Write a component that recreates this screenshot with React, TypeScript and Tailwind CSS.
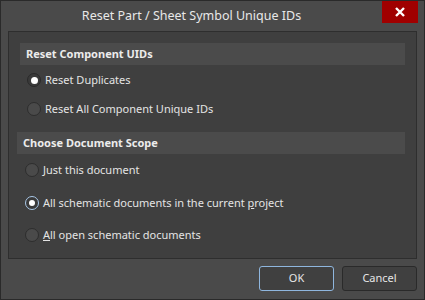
import React from 'react';

const font = { fontFamily: '"Noto Sans", "Open Sans", Arial, sans-serif' };

function Radio({ checked, focused }: { checked?: boolean; focused?: boolean }) {
  if (focused) {
    return (
      <span className="flex h-[14px] w-[14px] items-center justify-center rounded-full border border-[#a9c8e8] bg-[#3a3a3a]">
        <span className="h-[6px] w-[6px] rounded-full bg-white" />
      </span>
    );
  }
  if (checked) {
    return (
      <span className="flex h-[14px] w-[14px] items-center justify-center rounded-full border border-[#2a2a2a] bg-[#3a3a3a]">
        <span className="h-[7px] w-[7px] rounded-full bg-white" />
      </span>
    );
  }
  return <span className="h-[14px] w-[14px] rounded-full border border-[#2d2d2d] bg-[#4a4a4a]" />;
}

function Option({
  children,
  checked,
  focused,
  className,
}: {
  children: React.ReactNode;
  checked?: boolean;
  focused?: boolean;
  className?: string;
}) {
  return (
    <div className={`flex items-center gap-[4px] text-[11px] text-[#e4e4e4] ${className ?? ''}`}>
      <Radio checked={checked} focused={focused} />
      <span>{children}</span>
    </div>
  );
}

function SectionHeader({ title }: { title: string }) {
  return (
    <div className="flex h-[22px] items-center bg-[#4b4b4b] pl-[6px] text-[11px] font-bold text-[#ececec]">
      {title}
    </div>
  );
}

export default function App() {
  return (
    <div
      className="flex h-[300px] w-[425px] flex-col border border-[#2a2a2a] bg-[#4a4a4a] text-[#e6e6e6]"
      style={font}
    >
      {/* Title bar */}
      <div className="flex h-[30px] items-start">
        <div className="flex h-[30px] flex-1 items-center justify-center text-[12.5px] text-[#e8e8e8]">
          Reset Part / Sheet Symbol Unique IDs
        </div>
        <button className="mr-[6px] flex h-[22px] w-[36px] items-center justify-center bg-[#a00000]">
          <svg width="10" height="10" viewBox="0 0 10 10">
            <path d="M1 1 L9 9 M9 1 L1 9" stroke="white" strokeWidth="2.4" />
          </svg>
        </button>
      </div>

      {/* Content panel */}
      <div className="mx-[7px] flex h-[228px] flex-col border border-[#2e2e2e] bg-[#3f3f3f] px-[11px] pt-[11px]">
        <SectionHeader title="Reset Component UIDs" />
        <Option checked className="mt-[8px] h-[14px] pl-[7px]">
          Reset Duplicates
        </Option>
        <Option className="mt-[15px] h-[14px] pl-[7px]">Reset All Component Unique IDs</Option>

        {/* second group sits a few px further left */}
        <div className="-ml-[3px] flex flex-col">
          <div className="mt-[16px]">
            <SectionHeader title="Choose Document Scope" />
          </div>
          <Option className="mt-[9px] h-[14px] pl-[8px]">
            <span className="underline">J</span>ust this document
          </Option>
          <Option focused className="mt-[19px] h-[14px] pl-[8px]">
            All schematic documents in the current <span className="underline">p</span>roject
          </Option>
          <Option className="mt-[18px] h-[14px] pl-[8px]">
            <span className="underline">A</span>ll open schematic documents
          </Option>
        </div>
      </div>

      {/* Buttons */}
      <div className="mt-[7px] flex justify-end gap-[8px] pr-[7px]">
        <button className="h-[25px] w-[75px] rounded-[3px] border border-[#8fb6de] bg-[#404040] text-[11px] text-[#e6e6e6]">
          OK
        </button>
        <button className="h-[25px] w-[75px] rounded-[3px] border border-[#2a2a2a] bg-[#404040] text-[11px] text-[#e6e6e6]">
          Cancel
        </button>
      </div>
    </div>
  );
}
